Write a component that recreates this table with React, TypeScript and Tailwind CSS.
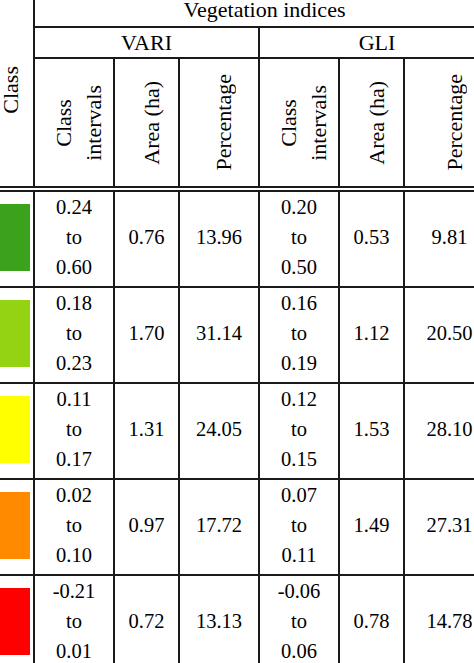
import React from "react";

const rows = [
  { color: "#3ba31b", vari: ["0.24", "0.60"], va: "0.76", vp: "13.96", gli: ["0.20", "0.50"], ga: "0.53", gp: "9.81" },
  { color: "#93d311", vari: ["0.18", "0.23"], va: "1.70", vp: "31.14", gli: ["0.16", "0.19"], ga: "1.12", gp: "20.50" },
  { color: "#ffff00", vari: ["0.11", "0.17"], va: "1.31", vp: "24.05", gli: ["0.12", "0.15"], ga: "1.53", gp: "28.10" },
  { color: "#ff8a00", vari: ["0.02", "0.10"], va: "0.97", vp: "17.72", gli: ["0.07", "0.11"], ga: "1.49", gp: "27.31" },
  { color: "#ff0000", vari: ["-0.21", "0.01"], va: "0.72", vp: "13.13", gli: ["-0.06", "0.06"], ga: "0.78", gp: "14.78" },
];

const cell = "border-2 border-[#1a1a1a] p-0 text-center align-middle";
const dcell = "border-2 border-[#1a1a1a] p-0 pb-[4px] text-center align-middle";

function Vert({ children }: { children: React.ReactNode }) {
  return (
    <div className="flex h-full w-full items-center justify-center pl-[10px]">
      <div className="rotate-180 text-center text-[22px] leading-[30px] [writing-mode:vertical-rl]">{children}</div>
    </div>
  );
}

function Interval({ a, b }: { a: string; b: string }) {
  return (
    <div className="flex flex-col items-center text-[20.5px] leading-[30px]">
      <span>{a}</span>
      <span>to</span>
      <span>{b}</span>
    </div>
  );
}

export default function App() {
  return (
    <div className="h-[663px] w-[474px] overflow-hidden bg-white text-black" style={{ fontFamily: '"Liberation Serif", "Times New Roman", serif' }}>
      <table className="ml-[-16px] mt-[-8px] w-[510px] table-fixed border-collapse">
        <colgroup>
          <col className="w-[49px]" />
          <col className="w-[80px]" />
          <col className="w-[65px]" />
          <col className="w-[80px]" />
          <col className="w-[80px]" />
          <col className="w-[65px]" />
          <col className="w-[91px]" />
        </colgroup>
        <thead>
          <tr className="h-[34px]">
            <td rowSpan={3} className={`${cell} border-b-[6px] border-double`}>
              <div className="flex h-full w-full items-center justify-center pl-[2px]">
                <div className="rotate-180 text-[22px] leading-[30px] [writing-mode:vertical-rl]">Class</div>
              </div>
            </td>
            <td colSpan={6} className={`${cell} text-[22px] leading-[26px]`}>Vegetation indices</td>
          </tr>
          <tr className="h-[31px]">
            <td colSpan={3} className={`${cell} text-[22px] leading-[26px]`}>VARI</td>
            <td colSpan={3} className={`${cell} text-[22px] leading-[26px]`}>GLI</td>
          </tr>
          <tr className="h-[131px]">
            <td className={`${cell} border-b-[6px] border-double`}><Vert>Class<br />intervals</Vert></td>
            <td className={`${cell} border-b-[6px] border-double`}><Vert>Area (ha)</Vert></td>
            <td className={`${cell} border-b-[6px] border-double`}><Vert>Percentage</Vert></td>
            <td className={`${cell} border-b-[6px] border-double`}><Vert>Class<br />intervals</Vert></td>
            <td className={`${cell} border-b-[6px] border-double`}><Vert>Area (ha)</Vert></td>
            <td className={`${cell} border-b-[6px] border-double`}><Vert>Percentage</Vert></td>
          </tr>
        </thead>
        <tbody>
          {rows.map((r, i) => (
            <tr key={i} className="h-[96px]">
              <td className={dcell}>
                <div className="flex justify-end pr-[3px]">
                  <div className="h-[67px] w-[42px]" style={{ backgroundColor: r.color }} />
                </div>
              </td>
              <td className={dcell}><Interval a={r.vari[0]} b={r.vari[1]} /></td>
              <td className={`${dcell} text-[20.5px]`}>{r.va}</td>
              <td className={`${dcell} text-[20.5px]`}>{r.vp}</td>
              <td className={dcell}><Interval a={r.gli[0]} b={r.gli[1]} /></td>
              <td className={`${dcell} text-[20.5px]`}>{r.ga}</td>
              <td className={`${dcell} text-[20.5px]`}>{r.gp}</td>
            </tr>
          ))}
        </tbody>
      </table>
    </div>
  );
}
